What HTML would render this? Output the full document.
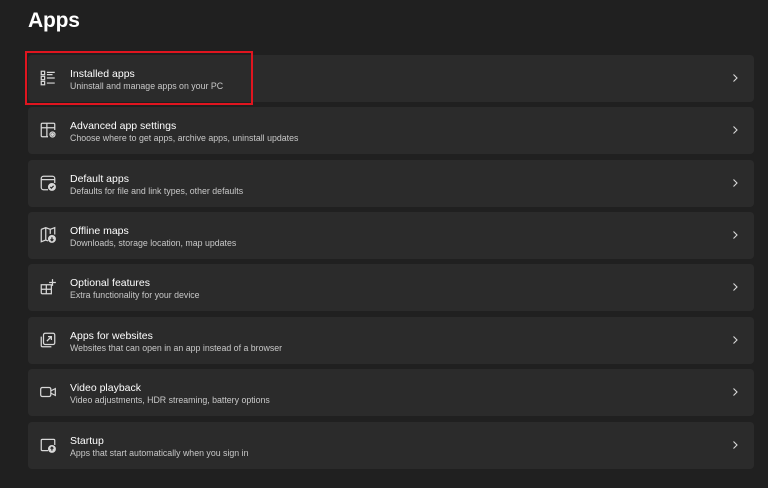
<!DOCTYPE html>
<html><head><meta charset="utf-8"><style>
*{margin:0;padding:0;box-sizing:border-box}
body{width:768px;height:488px;background:#202020;font-family:"Liberation Sans",sans-serif;color:#fff;position:relative;overflow:hidden}
h1{position:absolute;left:28px;top:9px;font-size:21px;font-weight:600;letter-spacing:-0.2px}
.card{position:absolute;left:28px;width:726px;height:47px;background:#2b2b2b;border-radius:4px}
.ic{position:absolute;left:11px;top:14px;width:18px;height:18px}
.t{position:absolute;left:42px;top:13px;font-size:10.5px;color:#fff;white-space:nowrap}
.s{position:absolute;left:42px;top:26px;font-size:8.8px;color:#c8c8c8;white-space:nowrap}
.ch{position:absolute;right:14px;top:18px;width:10px;height:10px}
.red{position:absolute;left:25px;top:51px;width:228px;height:54px;border:2px solid #e0151f}
svg{fill:none;stroke:#d8d8d8;stroke-width:1.1}
</style></head><body>
<h1>Apps</h1>

<div class="card" style="top:55px">
<svg class="ic" viewBox="0 0 16 16"><rect x="2" y="2" width="3" height="3"/><rect x="2" y="6.5" width="3" height="3"/><rect x="2" y="11" width="3" height="3"/><path d="M7 3h7M7 5h5M7 8h7M7 12.5h7"/></svg>
<div class="t">Installed apps</div><div class="s">Uninstall and manage apps on your PC</div>
<svg class="ch" viewBox="0 0 10 10"><path d="M3.5 1.5L7 5 3.5 8.5"/></svg></div>

<div class="card" style="top:107px">
<svg class="ic" viewBox="0 0 16 16"><path d="M8 14H3a1 1 0 0 1-1-1V3a1 1 0 0 1 1-1h10a1 1 0 0 1 1 1v5M2 6h12M7 2v12"/><circle cx="12" cy="12" r="2.2"/><circle cx="12" cy="12" r="0.8" fill="#d8d8d8"/></svg>
<div class="t">Advanced app settings</div><div class="s">Choose where to get apps, archive apps, uninstall updates</div>
<svg class="ch" viewBox="0 0 10 10"><path d="M3.5 1.5L7 5 3.5 8.5"/></svg></div>

<div class="card" style="top:160px">
<svg class="ic" viewBox="0 0 16 16"><path d="M8 14H4a2 2 0 0 1-2-2V4a2 2 0 0 1 2-2h8a2 2 0 0 1 2 2v4M2 5h12"/><circle cx="11.5" cy="11.5" r="3" fill="#d8d8d8"/><path d="M10 11.5l1 1 2-2" stroke="#2b2b2b"/></svg>
<div class="t">Default apps</div><div class="s">Defaults for file and link types, other defaults</div>
<svg class="ch" viewBox="0 0 10 10"><path d="M3.5 1.5L7 5 3.5 8.5"/></svg></div>

<div class="card" style="top:212px">
<svg class="ic" viewBox="0 0 16 16"><path d="M2 3l4-1.5 4 1.5 4-1.5v6M2 3v11l4-1.5 2 .8M6 1.5v11M10 3v4"/><circle cx="11.5" cy="11.5" r="3" fill="#d8d8d8"/><path d="M11.5 10v3M10.2 11.8l1.3 1.3 1.3-1.3" stroke="#2b2b2b"/></svg>
<div class="t">Offline maps</div><div class="s">Downloads, storage location, map updates</div>
<svg class="ch" viewBox="0 0 10 10"><path d="M3.5 1.5L7 5 3.5 8.5"/></svg></div>

<div class="card" style="top:264px">
<svg class="ic" viewBox="0 0 16 16"><path d="M2 6h9v8H3a1 1 0 0 1-1-1zM2 10h9M6.5 6v8M12 1v6M9 4h6"/></svg>
<div class="t">Optional features</div><div class="s">Extra functionality for your device</div>
<svg class="ch" viewBox="0 0 10 10"><path d="M3.5 1.5L7 5 3.5 8.5"/></svg></div>

<div class="card" style="top:317px">
<svg class="ic" viewBox="0 0 16 16"><rect x="4" y="2" width="10" height="10" rx="1.5"/><path d="M2 5v8a1 1 0 0 0 1 1h8M7 9l4-4M8 5h3v3"/></svg>
<div class="t">Apps for websites</div><div class="s">Websites that can open in an app instead of a browser</div>
<svg class="ch" viewBox="0 0 10 10"><path d="M3.5 1.5L7 5 3.5 8.5"/></svg></div>

<div class="card" style="top:369px">
<svg class="ic" viewBox="0 0 16 16"><rect x="1.5" y="4" width="9" height="8" rx="1.5"/><path d="M10.5 7l4-2v6l-4-2"/></svg>
<div class="t">Video playback</div><div class="s">Video adjustments, HDR streaming, battery options</div>
<svg class="ch" viewBox="0 0 10 10"><path d="M3.5 1.5L7 5 3.5 8.5"/></svg></div>

<div class="card" style="top:422px">
<svg class="ic" viewBox="0 0 16 16"><path d="M8 13H3a1 1 0 0 1-1-1V4a1 1 0 0 1 1-1h10a1 1 0 0 1 1 1v4"/><circle cx="11.5" cy="11.5" r="3" fill="#d8d8d8"/><path d="M11.5 13v-3M10.2 11.2l1.3-1.3 1.3 1.3" stroke="#2b2b2b"/></svg>
<div class="t">Startup</div><div class="s">Apps that start automatically when you sign in</div>
<svg class="ch" viewBox="0 0 10 10"><path d="M3.5 1.5L7 5 3.5 8.5"/></svg></div>

<div class="red"></div>
</body></html>
